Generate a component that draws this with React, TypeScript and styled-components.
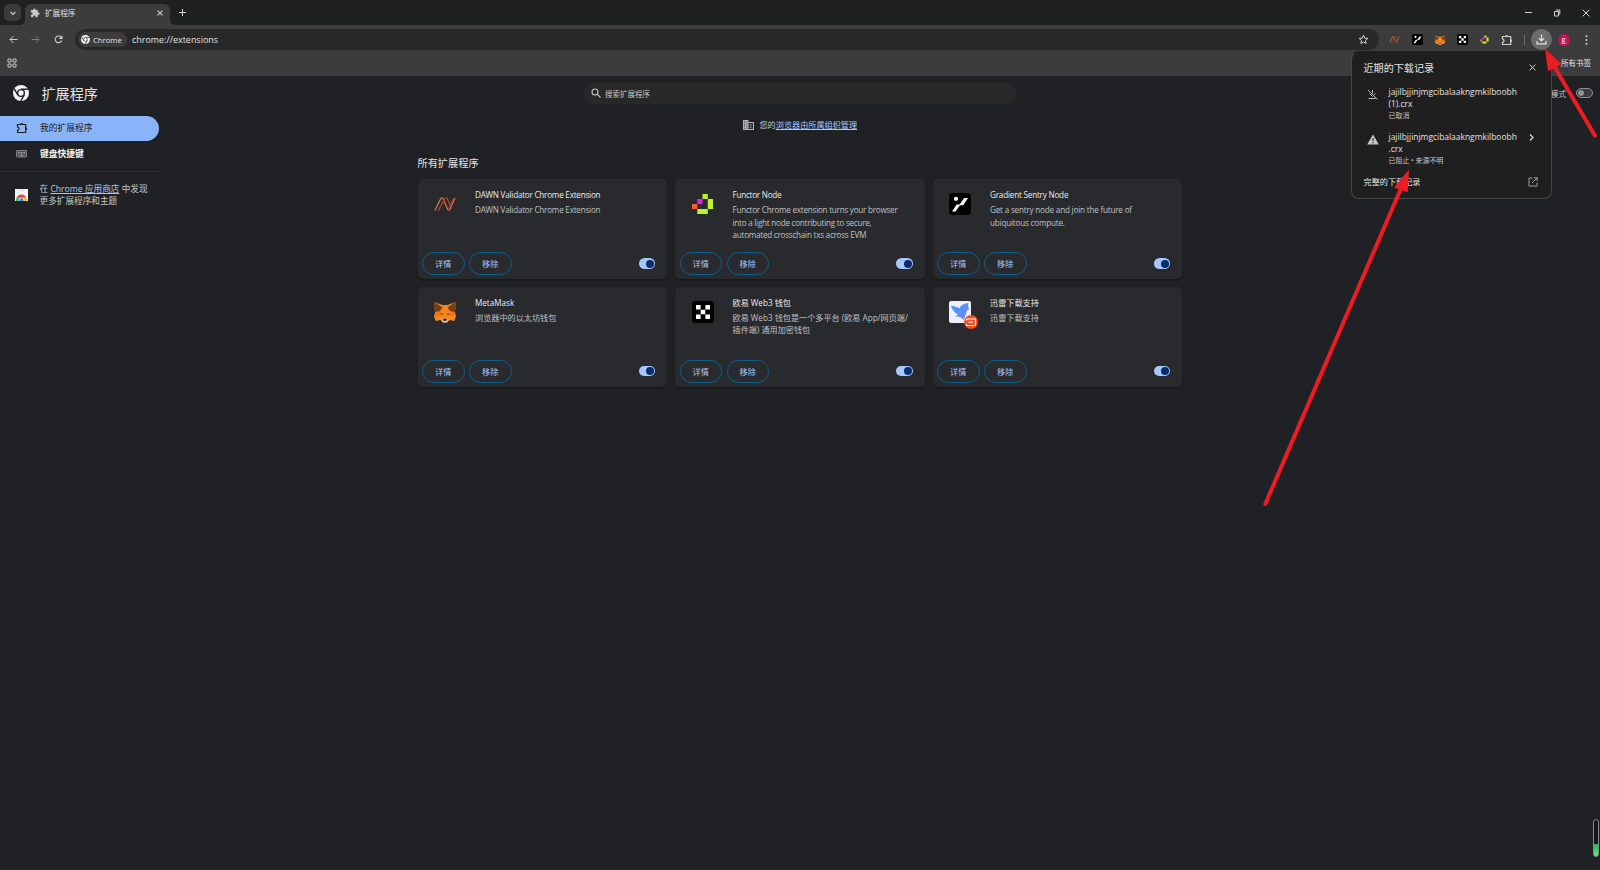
import type { ReactNode } from "react";
import styled, { createGlobalStyle, css } from "styled-components";

const GlobalStyle = createGlobalStyle`
  * {
    box-sizing: border-box;
  }

  body {
    margin: 0;
    overflow: hidden;
    background: #202124;
    color: #e3e3e3;
    font-family: "Open Sans", "Noto Sans CJK SC", sans-serif;
    font-size: 8.15px;
  }

  svg {
    display: block;
    flex: none;
  }
`;

const Window = styled.div`
  position: relative;
  display: flex;
  flex-direction: column;
  width: 1600px;
  height: 870px;
  overflow: hidden;
`;

/* ---------- tab strip ---------- */

const TabStrip = styled.div`
  display: flex;
  align-items: flex-end;
  height: 25px;
  padding-left: 4px;
  background: #1f2020;
`;

const TabSearch = styled.div`
  display: flex;
  align-items: center;
  justify-content: center;
  width: 17px;
  height: 17px;
  margin-bottom: 4px;
  border-radius: 5px;
  background: #3a3a3a;
`;

const Tab = styled.div`
  position: relative;
  display: flex;
  align-items: center;
  width: 145px;
  height: 21px;
  margin-left: 4px;
  padding: 0 7px 4px 5px;
  border-radius: 6px 6px 0 0;
  background: #3c3c3c;

  &::before,
  &::after {
    content: "";
    position: absolute;
    bottom: 0;
    width: 5px;
    height: 5px;
  }

  &::before {
    left: -5px;
    background: radial-gradient(circle at 0 0, transparent 5px, #3c3c3c 5px);
  }

  &::after {
    right: -5px;
    background: radial-gradient(circle at 100% 0, transparent 5px, #3c3c3c 5px);
  }
`;

const TabTitle = styled.span`
  flex: 1;
  margin-left: 5px;
  font-size: 7.6px;
  line-height: 12px;
`;

const NewTab = styled.div`
  margin: 0 0 8px 8px;
`;

const WindowControls = styled.div`
  display: flex;
  height: 25px;
  margin-left: auto;
`;

const ControlBox = styled.div<{ $width: number }>`
  display: flex;
  align-items: center;
  justify-content: center;
  width: ${({ $width }) => $width}px;
`;

/* ---------- toolbar ---------- */

const Toolbar = styled.div`
  display: flex;
  align-items: center;
  height: 29px;
  padding-left: 2px;
  background: #3c3c3c;
`;

const Omnibox = styled.div`
  display: flex;
  align-items: center;
  width: 1304px;
  height: 21px;
  margin: 0 4.5px 0 5.5px;
  padding: 0 10px 0 3px;
  border-radius: 11px;
  background: #282828;
`;

const SiteChip = styled.div`
  display: flex;
  align-items: center;
  width: 49px;
  height: 15px;
  padding-left: 3px;
  gap: 3px;
  border-radius: 8px;
  background: #3c3c3c;
  font-size: 7.7px;
  line-height: 12px;
`;

const Url = styled.span`
  flex: 1;
  margin-left: 5px;
  font-size: 8.95px;
  line-height: 13px;
`;

const Separator = styled.div`
  width: 1px;
  height: 10px;
  margin: 0 6px 0 5px;
  background: #6a6a6a;
`;

const DownloadButton = styled.div`
  display: flex;
  align-items: center;
  justify-content: center;
  width: 21px;
  height: 21px;
  border-radius: 50%;
  background: #6b6b6b;
`;

const Avatar = styled.div`
  width: 12px;
  height: 12px;
  border-radius: 50%;
  background: #c2185b;
  color: #fff;
  font-size: 6.5px;
  line-height: 11px;
  text-align: center;
`;

const BookmarkBar = styled.div`
  display: flex;
  align-items: center;
  justify-content: space-between;
  height: 22px;
  padding: 0 9px 5px 7px;
  background: #3c3c3c;
  font-size: 7.5px;
`;

/* ---------- page ---------- */

const Page = styled.div`
  display: flex;
  flex: 1;
  background: #202124;
`;

const Sidebar = styled.div`
  width: 160px;
`;

const Brand = styled.div`
  display: flex;
  align-items: center;
  height: 34px;
  margin-bottom: 5.5px;
  padding-left: 12.5px;
  gap: 13px;
  font-size: 14.1px;
  line-height: 20px;

  span {
    padding-top: 1px;
  }
`;

const NavItem = styled.div<{ $active?: boolean }>`
  display: flex;
  align-items: center;
  width: 159px;
  height: 25.5px;
  padding-left: 16px;
  border-radius: 0 13px 13px 0;

  ${({ $active }) =>
    $active
      ? css`
          background: #8ab4f8;
          color: #202124;
        `
      : css`
          color: #f1f3f4;
          font-weight: 700;
        `}
`;

const NavIcon = styled.div`
  width: 24px;
`;

const NavText = styled.span`
  font-size: 8.75px;
  line-height: 12px;
`;

const StorePromo = styled.div`
  display: flex;
  align-items: center;
  width: 160px;
  height: 48px;
  margin-top: 4px;
  padding-left: 14.5px;
  gap: 12px;
  border-top: 1px solid #2d2e31;
  color: #c4c7c5;
  font-size: 8.65px;
  line-height: 12px;
  white-space: nowrap;
`;

const Link = styled.span`
  color: #a8c7fa;
  text-decoration: underline;
`;

const Main = styled.div`
  display: flex;
  flex-direction: column;
  flex: 1;
`;

const SearchRow = styled.div`
  display: flex;
  justify-content: space-between;
  height: 34px;
  padding: 6px 7.5px 0 424px;
`;

const SearchBox = styled.div`
  display: flex;
  align-items: center;
  width: 432px;
  height: 22px;
  padding-left: 7px;
  gap: 4px;
  border-radius: 11px;
  background: #282828;
  color: #c7c7c7;
  font-size: 7.5px;
`;

const DevMode = styled.div`
  display: flex;
  align-items: center;
  height: 22px;
  gap: 10px;
  color: #c4c7c5;
  font-size: 7.6px;
`;

const Content = styled.div`
  width: 764.5px;
  margin-left: 257.5px;
`;

const ManagedNotice = styled.div`
  display: flex;
  align-items: center;
  justify-content: center;
  height: 12px;
  margin-top: 8.5px;
  padding-left: 1px;
  gap: 5px;
  color: #c4c7c5;
  line-height: 12px;
`;

const SectionTitle = styled.div`
  margin: 24.5px 0 8px;
  font-size: 10.2px;
  line-height: 16px;
`;

const CardGrid = styled.div`
  display: grid;
  grid-template-columns: repeat(3, 249.5px);
  grid-auto-rows: 100px;
  gap: 7.5px 8px;
`;

const Card = styled.div`
  display: flex;
  flex-direction: column;
  justify-content: space-between;
  padding: 10px 4px 4px 4.5px;
  border-radius: 5px;
  background: #292a2d;
  box-shadow: 0 1px 2px rgba(0, 0, 0, 0.35);
`;

const CardBody = styled.div`
  display: flex;
  gap: 19px;
  padding-left: 12px;
`;

const CardIcon = styled.div`
  position: relative;
  width: 22px;
  height: 22px;
  margin-top: 4px;
`;

const IconBadge = styled.div`
  position: absolute;
  right: -7px;
  bottom: -6px;
`;

const CardText = styled.div<{ $tracking: number }>`
  letter-spacing: ${({ $tracking }) => $tracking}px;
  line-height: 12.5px;
  white-space: pre-line;
`;

const CardName = styled.div`
  margin-bottom: 2.5px;
  color: #e8eaed;
`;

const CardDescription = styled.div`
  color: #bdc1c6;
`;

const CardActions = styled.div`
  display: flex;
  align-items: center;
  gap: 4.5px;
  padding-right: 8px;
`;

const PillButton = styled.div`
  width: 42.5px;
  height: 23px;
  border: 1px solid #0b5f8c;
  border-radius: 12px;
  color: #a8c7fa;
  line-height: 21px;
  text-align: center;
`;

const Toggle = styled.div<{ $on?: boolean }>`
  display: flex;
  align-items: center;
  justify-content: ${({ $on }) => ($on ? "flex-end" : "flex-start")};
  width: 16.5px;
  height: 10.5px;
  margin-left: ${({ $on }) => ($on ? "auto" : "0")};
  padding: 0 1px;
  border: ${({ $on }) => ($on ? "none" : "1px solid #8e918f")};
  border-radius: 6px;
  background: ${({ $on }) => ($on ? "#a8c7fa" : "#3a3b3d")};

  &::before {
    content: "";
    width: ${({ $on }) => ($on ? 8 : 6)}px;
    height: ${({ $on }) => ($on ? 8 : 6)}px;
    border-radius: 50%;
    background: ${({ $on }) => ($on ? "#062e6f" : "#8e918f")};
  }
`;

/* ---------- downloads bubble ---------- */

const DownloadBubble = styled.div`
  position: absolute;
  top: 51px;
  left: 1351px;
  width: 200.5px;
  height: 147.5px;
  padding: 8px 13px 0 11.5px;
  border: 1px solid #444746;
  border-top-color: #1f1f1f;
  border-radius: 8px;
  background: #1f1f1f;
`;

const BubbleHeader = styled.div`
  display: flex;
  align-items: center;
  justify-content: space-between;
  height: 16px;
  font-size: 10.1px;
  line-height: 16px;

  svg {
    margin: -2px 2px 0 0;
  }
`;

const DownloadItem = styled.div`
  display: flex;
  height: 45px;
  padding-top: 9.5px;
`;

const DownloadIcon = styled.div`
  width: 25px;
  padding: 3.5px 0 0 3px;
`;

const DownloadText = styled.div`
  flex: 1;
  font-size: 8.45px;
  line-height: 12.5px;
  white-space: nowrap;
`;

const DownloadStatus = styled.div`
  color: #c7c7c7;
  font-size: 6.95px;
  line-height: 9px;
`;

const Chevron = styled.div`
  padding: 3px 3px 0 0;
`;

const BubbleFooter = styled.div`
  display: flex;
  align-items: center;
  justify-content: space-between;
  height: 12px;
  margin-top: 10px;
  line-height: 12px;
`;

const Arrows = styled.svg`
  position: absolute;
  top: 0;
  left: 0;
`;

const Gauge = styled.div`
  position: absolute;
  right: 1px;
  bottom: 13px;
  width: 6px;
  height: 38px;
  border: 1px solid #8a8a8a;
  border-radius: 3px;
  background: linear-gradient(#151617 68%, #1db954 68%, #6fe87c 100%);
`;

interface StrokeIconProps {
  size: number;
  children: ReactNode;
  color?: string;
  width?: number;
}

const StrokeIcon = ({ size, children, color = "#d0d0d0", width = 1 }: StrokeIconProps) => (
  <svg
    width={size}
    height={size}
    viewBox={`0 0 ${size} ${size}`}
    fill='none'
    stroke={color}
    strokeWidth={width}
  >
    {children}
  </svg>
);

const CloseIcon = ({ size, width = 1 }: { size: number; width?: number }) => (
  <StrokeIcon size={size} width={width}>
    <path d={`M.6.6 ${size - 0.6} ${size - 0.6}M${size - 0.6}.6.6 ${size - 0.6}`} />
  </StrokeIcon>
);

const ChromeIcon = ({ size, line = "#202124" }: { size: number; line?: string }) => (
  <svg width={size} height={size} viewBox='0 0 24 24'>
    <circle cx='12' cy='12' r='12' fill='#f1f3f4' />
    <circle cx='12' cy='12' r='5' fill='#f1f3f4' stroke={line} strokeWidth='2' />
    <path
      d='M12 6.4H23M7.1 14.8 1.8 5.5M16.9 14.8 11.6 24'
      stroke={line}
      strokeWidth='2'
      fill='none'
    />
  </svg>
);

const PuzzleIcon = () => (
  <svg width='10' height='10' viewBox='0 0 24 24' fill='#c7c7c7'>
    <path d='M20.5 11H19V7c0-1.1-.9-2-2-2h-4V3.5a2.5 2.5 0 0 0-5 0V5H4c-1.1 0-2 .9-2 2v3.8h1.5a2.7 2.7 0 0 1 0 5.4H2V20c0 1.1.9 2 2 2h3.8v-1.5a2.7 2.7 0 0 1 5.4 0V22H17c1.1 0 2-.9 2-2v-4h1.5a2.5 2.5 0 0 0 0-5z' />
  </svg>
);

const PuzzleOutline = ({ color }: { color: string }) => (
  <StrokeIcon size={12} color={color} width={1.2}>
    <path d='M1.5 2.5H9.7V10.5H1.5V8.3A1.4 1.6 0 0 0 1.5 5Z' />
    <path d='M4.5 1.9H6.9M10.4 5.4V7.8' />
  </StrokeIcon>
);

const DawnIcon = ({ size }: { size: number }) => (
  <svg width={size} height={size} viewBox='0 0 22 22' fill='none' strokeWidth='1.2'>
    <path d='M1 17.5 7 5H8.8L14 17H15.5L21 5' stroke='#d97a4b' />
    <path d='M4.5 17.5 9 8.5M11 5H13L17.5 15.5' stroke='#b9492f' />
    <path d='M11.5 5 8.5 11M14 17.5 19.5 5' stroke='#a03c28' />
  </svg>
);

const GradientIcon = ({ size }: { size: number }) => (
  <svg width={size} height={size} viewBox='0 0 22 22'>
    <rect width='22' height='22' rx='3.5' fill='#000' />
    <circle cx='7' cy='5.8' r='2.1' fill='#fff' />
    <path d='M3 18.5 7.7 11.5H10.6L15.2 5H19L14.2 12.2H11L6.5 18.5Z' fill='#fff' />
  </svg>
);

const FoxIcon = ({ size }: { size: number }) => (
  <svg width={size} height={size} viewBox='0 0 22 22'>
    <path
      d='M.8 1 8.5 4H13.5L21.2 1 22 6 20.7 11 22 15.5 20.3 20 15.5 19 13 21.5H9L6.5 19 1.7 20 0 15.5 1.3 11 0 6Z'
      fill='#f6851b'
    />
    <path
      d='M.8 1 8.5 6.5 5.5 10.5 1.3 11 0 6ZM21.2 1 13.5 6.5 16.5 10.5 20.7 11 22 6Z'
      fill='#763d16'
    />
    <path
      d='M1.3 11 5.5 10.5 7 15 0 15.5ZM20.7 11 16.5 10.5 15 15 22 15.5Z'
      fill='#e8791c'
    />
    <path
      d='M5.5 12.5 9 12.5 8.5 14.3ZM16.5 12.5 13 12.5 13.5 14.3Z'
      fill='#6b4326'
    />
    <path d='M7 19 9 17.8H13L15 19 13 21.5H9Z' fill='#d7c1b3' />
    <path d='M9 18.5 9.7 17.8H12.3L13 18.5 12.6 19.8H9.4Z' fill='#2a2320' />
  </svg>
);

const OkxIcon = ({ size }: { size: number }) => (
  <svg width={size} height={size} viewBox='0 0 22 22'>
    <rect width='22' height='22' rx='3.5' fill='#000' />
    <path
      d='M4 4h4.6v4.6H4zM13.4 4H18v4.6h-4.6zM8.7 8.7h4.6v4.6H8.7zM4 13.4h4.6V18H4zM13.4 13.4H18V18h-4.6z'
      fill='#fff'
    />
  </svg>
);

const FunctorIcon = ({ size }: { size: number }) => (
  <svg width={size} height={size} viewBox='0 0 22 22'>
    <path
      d='M10.5 1h5.3v5h-5.3zM15.8 6H21v10h-5.2zM5.3 16h10.5v5H5.3z'
      fill='#c0f22c'
    />
    <path d='M5.3 6h5.2v5H5.3z' fill='#e81ef0' />
    <path d='M0 11h5.3v5H0z' fill='#ff5a2e' />
  </svg>
);

const ThunderIcon = () => (
  <>
    <svg width='22' height='22' viewBox='0 0 22 22'>
      <defs>
        <linearGradient id='bird' x1='0' y1='0' x2='1' y2='1'>
          <stop offset='0' stopColor='#4aa0fb' />
          <stop offset='.6' stopColor='#5f8bf8' />
          <stop offset='1' stopColor='#c07af5' />
        </linearGradient>
      </defs>
      <rect width='22' height='22' rx='2' fill='#eef0fb' />
      <path
        d='M2 4.5C5 5.5 8.5 5.5 10.5 7.5 12 3.5 15.5 2.500 19.5 2 19 4.5 18.5 6 20.5 8.5L18 9C17.5 13 15.5 16 14.5 19.5 13 16 9.5 15.5 6 15.5 7.5 15 8.5 14 9 13 5.5 12.5 5 9.5 3 8Z'
        fill='url(#bird)'
      />
    </svg>
    <IconBadge>
      <svg width='14' height='14' viewBox='0 0 14 14' fill='none' stroke='#fff'>
        <circle cx='7' cy='7' r='7' fill='#f4511e' stroke='none' />
        <path d='M2.5 5.5V4H11.5V10.5H2.5V9M4.5 7.2H9' />
      </svg>
    </IconBadge>
  </>
);

const StoreIcon = () => (
  <svg width='13' height='12' viewBox='0 0 13 12'>
    <path d='M0 0H13V12H0Z' fill='#f1f3f4' />
    <path d='M4.5 1.5H8.5' stroke='#dadce0' />
    <path d='M1.8 8.5A5.2 5.2 0 0 1 11.2 8.5L6.5 10Z' fill='#ea4335' />
    <path d='M1.2 12A5.5 5.5 0 0 1 2.2 7.8L5 12Z' fill='#34a853' />
    <path d='M11.2 8.5A6 6 0 0 1 11.8 12H8L8 8.5Z' fill='#fbbc04' />
    <circle cx='6.5' cy='11.3' r='2.5' fill='#4285f4' stroke='#fff' strokeWidth='.7' />
  </svg>
);

interface Extension {
  name: string;
  description: string;
  icon: ReactNode;
  tracking?: number;
}

const extensions: Extension[] = [
  {
    name: "DAWN Validator Chrome Extension",
    description: "DAWN Validator Chrome Extension",
    icon: <DawnIcon size={22} />,
    tracking: -0.23,
  },
  {
    name: "Functor Node",
    description:
      "Functor Chrome extension turns your browser\ninto a light node contributing to secure,\nautomated crosschain txs across EVM",
    icon: <FunctorIcon size={22} />,
    tracking: -0.25,
  },
  {
    name: "Gradient Sentry Node",
    description: "Get a sentry node and join the future of\nubiquitous compute.",
    icon: <GradientIcon size={22} />,
    tracking: -0.2,
  },
  {
    name: "MetaMask",
    description: "浏览器中的以太坊钱包",
    icon: <FoxIcon size={22} />,
  },
  {
    name: "欧易 Web3 钱包",
    description: "欧易 Web3 钱包是一个多平台 (欧易 App/网页端/\n插件端) 通用加密钱包",
    icon: <OkxIcon size={22} />,
  },
  {
    name: "迅雷下载支持",
    description: "迅雷下载支持",
    icon: <ThunderIcon />,
  },
];

const ExtensionCard = ({ name, description, icon, tracking = 0 }: Extension) => (
  <Card>
    <CardBody>
      <CardIcon>{icon}</CardIcon>
      <CardText $tracking={tracking}>
        <CardName>{name}</CardName>
        <CardDescription>{description}</CardDescription>
      </CardText>
    </CardBody>
    <CardActions>
      <PillButton>详情</PillButton>
      <PillButton>移除</PillButton>
      <Toggle $on />
    </CardActions>
  </Card>
);

const BrowserTabs = () => (
  <TabStrip>
    <TabSearch>
      <StrokeIcon size={8} width={1.2}>
        <path d='M1.5 2.8 4 5.3 6.5 2.8' />
      </StrokeIcon>
    </TabSearch>
    <Tab>
      <PuzzleIcon />
      <TabTitle>扩展程序</TabTitle>
      <CloseIcon size={6} width={1.1} />
    </Tab>
    <NewTab>
      <StrokeIcon size={9}>
        <path d='M4.5 1V8M1 4.5H8' />
      </StrokeIcon>
    </NewTab>
    <WindowControls>
      <ControlBox $width={28.7}>
        <StrokeIcon size={7}>
          <path d='M0 3.5H7' />
        </StrokeIcon>
      </ControlBox>
      <ControlBox $width={28.7}>
        <StrokeIcon size={8}>
          <path d='M1.5 2.5H5.5V7H1.5ZM3 1H6.8V5.5' />
        </StrokeIcon>
      </ControlBox>
      <ControlBox $width={28.7}>
        <CloseIcon size={8} />
      </ControlBox>
    </WindowControls>
  </TabStrip>
);

const BrowserToolbar = () => (
  <Toolbar>
    <ControlBox $width={22.5}>
      <StrokeIcon size={9}>
        <path d='M8.5 4.5H1.2M4.5 1 1 4.5 4.5 8' />
      </StrokeIcon>
    </ControlBox>
    <ControlBox $width={22.5}>
      <StrokeIcon size={9} color='#7d7d7d'>
        <path d='M.5 4.5H7.8M4.5 1 8 4.5 4.5 8' />
      </StrokeIcon>
    </ControlBox>
    <ControlBox $width={22.5}>
      <StrokeIcon size={9} width={1.1}>
        <path d='M7.6 5.5A3.3 3.3 0 1 1 7 2.2L8 3.3M8 .8V3.4H5.3' />
      </StrokeIcon>
    </ControlBox>
    <Omnibox>
      <SiteChip>
        <ChromeIcon size={9} line='#3c3c3c' />
        Chrome
      </SiteChip>
      <Url>chrome://extensions</Url>
      <StrokeIcon size={11}>
        <path d='M5.5 1.2 6.7 4.1 9.9 4.4 7.5 6.5 8.2 9.6 5.5 7.9 2.8 9.6 3.5 6.5 1.1 4.4 4.3 4.1Z' />
      </StrokeIcon>
    </Omnibox>
    <ControlBox $width={22.5}>
      <DawnIcon size={11} />
    </ControlBox>
    <ControlBox $width={22.5}>
      <GradientIcon size={11} />
    </ControlBox>
    <ControlBox $width={22.5}>
      <FoxIcon size={10} />
    </ControlBox>
    <ControlBox $width={22.5}>
      <OkxIcon size={11} />
    </ControlBox>
    <ControlBox $width={22.5}>
      <FunctorIcon size={9} />
    </ControlBox>
    <ControlBox $width={22.5}>
      <PuzzleOutline color='#d0d0d0' />
    </ControlBox>
    <Separator />
    <DownloadButton>
      <StrokeIcon size={11} color='#e3e3e3' width={1.2}>
        <path d='M5.5 .5V6.8M2.8 4.2 5.5 6.9 8.2 4.2M1 7V9.8H10V7' />
      </StrokeIcon>
    </DownloadButton>
    <ControlBox $width={24}>
      <Avatar>g</Avatar>
    </ControlBox>
    <ControlBox $width={21}>
      <svg width='3' height='10' viewBox='0 0 3 10' fill='#d0d0d0'>
        <circle cx='1.5' cy='1.3' r='1' />
        <circle cx='1.5' cy='5' r='1' />
        <circle cx='1.5' cy='8.7' r='1' />
      </svg>
    </ControlBox>
  </Toolbar>
);

const Downloads = () => (
  <DownloadBubble>
    <BubbleHeader>
      近期的下载记录
      <CloseIcon size={7} />
    </BubbleHeader>
    <DownloadItem>
      <DownloadIcon>
        <StrokeIcon size={11} color='#b8b8b8'>
          <path d='M1 1 10.5 10.5M5.5 1V4.5M6.5 6 8.5 4.3M2.5 4.5 5.5 7.5M1.5 9.5H8.5' />
        </StrokeIcon>
      </DownloadIcon>
      <DownloadText>
        jajilbjjinjmgcibalaakngmkilboobh
        <br />
        (1).crx
        <DownloadStatus>已取消</DownloadStatus>
      </DownloadText>
    </DownloadItem>
    <DownloadItem>
      <DownloadIcon>
        <svg width='12' height='11' viewBox='0 0 12 11'>
          <path d='M6 .5 11.8 10.5H.2Z' fill='#c7c7c7' />
          <path d='M6 4V7M6 8V9.2' stroke='#1f1f1f' strokeWidth='1.1' />
        </svg>
      </DownloadIcon>
      <DownloadText>
        jajilbjjinjmgcibalaakngmkilboobh
        <br />
        .crx
        <DownloadStatus>已阻止 • 来源不明</DownloadStatus>
      </DownloadText>
      <Chevron>
        <StrokeIcon size={7} width={1.3}>
          <path d='M2 .5 5 3.5 2 6.5' />
        </StrokeIcon>
      </Chevron>
    </DownloadItem>
    <BubbleFooter>
      完整的下载记录
      <StrokeIcon size={10} color='#a0a0a0'>
        <path d='M4.5 1H1V9H9V5.5M6 .8H9.2V4M9 1 4 6' />
      </StrokeIcon>
    </BubbleFooter>
  </DownloadBubble>
);

const App = () => (
  <Window>
    <GlobalStyle />
    <BrowserTabs />
    <BrowserToolbar />
    <BookmarkBar>
      <StrokeIcon size={10} color='#c7c7c7'>
        <path d='M1 1H4V4H1ZM6 1H9V4H6ZM1 6H4V9H1ZM6 6H9V9H6Z' />
      </StrokeIcon>
      所有书签
    </BookmarkBar>
    <Page>
      <Sidebar>
        <Brand>
          <ChromeIcon size={16} />
          <span>扩展程序</span>
        </Brand>
        <NavItem $active>
          <NavIcon>
            <PuzzleOutline color='#202124' />
          </NavIcon>
          <NavText>我的扩展程序</NavText>
        </NavItem>
        <NavItem>
          <NavIcon>
            <svg width='11' height='8' viewBox='0 0 11 8'>
              <rect
                x='.5'
                y='.5'
                width='10'
                height='6.5'
                rx='.5'
                fill='#4a4c50'
                stroke='#7d8085'
              />
              <path
                d='M2 2.5H9M2 4H9'
                stroke='#a5a8ad'
                strokeWidth='.9'
                strokeDasharray='1 .5'
              />
              <path d='M3.5 5.7H7.5' stroke='#a5a8ad' strokeWidth='.8' />
            </svg>
          </NavIcon>
          <NavText>键盘快捷键</NavText>
        </NavItem>
        <StorePromo>
          <StoreIcon />
          <div>
            在 <Link>Chrome 应用商店</Link> 中发现
            <br />
            更多扩展程序和主题
          </div>
        </StorePromo>
      </Sidebar>
      <Main>
        <SearchRow>
          <SearchBox>
            <StrokeIcon size={10} color='#c7c7c7' width={1.1}>
              <circle cx='4' cy='4' r='3' />
              <path d='M6.2 6.2 9.5 9.5' />
            </StrokeIcon>
            搜索扩展程序
          </SearchBox>
          <DevMode>
            开发者模式
            <Toggle />
          </DevMode>
        </SearchRow>
        <Content>
          <ManagedNotice>
            <svg width='11' height='10' viewBox='0 0 11 10'>
              <path d='M0 0H5.5V2H11V10H0Z' fill='#b0b3b8' />
              <path
                d='M1 1.2h1v1H1zM3.5 1.2h1v1h-1zM1 3.4h1v1H1zM3.5 3.4h1v1h-1zM1 5.6h1v1H1zM3.5 5.6h1v1h-1zM1 7.8h1v1H1zM3.5 7.8h1v1h-1z'
                fill='#3c3d40'
              />
              <path d='M5.5 3H10V9H5.5Z' fill='#2a2b2e' />
              <path
                d='M7 4.5h1.5v1H7zM7 6.7h1.5v1H7zM5.5 4.5h.7v1h-.7zM5.5 6.7h.7v1h-.7z'
                fill='#b0b3b8'
              />
            </svg>
            <span>
              您的<Link>浏览器由所属组织管理</Link>
            </span>
          </ManagedNotice>
          <SectionTitle>所有扩展程序</SectionTitle>
          <CardGrid>
            {extensions.map((extension) => (
              <ExtensionCard key={extension.name} {...extension} />
            ))}
          </CardGrid>
        </Content>
      </Main>
    </Page>
    <Downloads />
    <Gauge />
    <Arrows width='1600' height='870' fill='#ed1c24' stroke='#ed1c24'>
      <path
        d='M1265.3 504 1402 186M1595 135.7 1554 66'
        strokeWidth='4'
        strokeLinecap='round'
      />
      <path
        d='M1409 169.5 1394 187.5 1407.7 192.3ZM1545 49 1548 71.3 1561.5 64Z'
        stroke='none'
      />
    </Arrows>
  </Window>
);

export default App;
